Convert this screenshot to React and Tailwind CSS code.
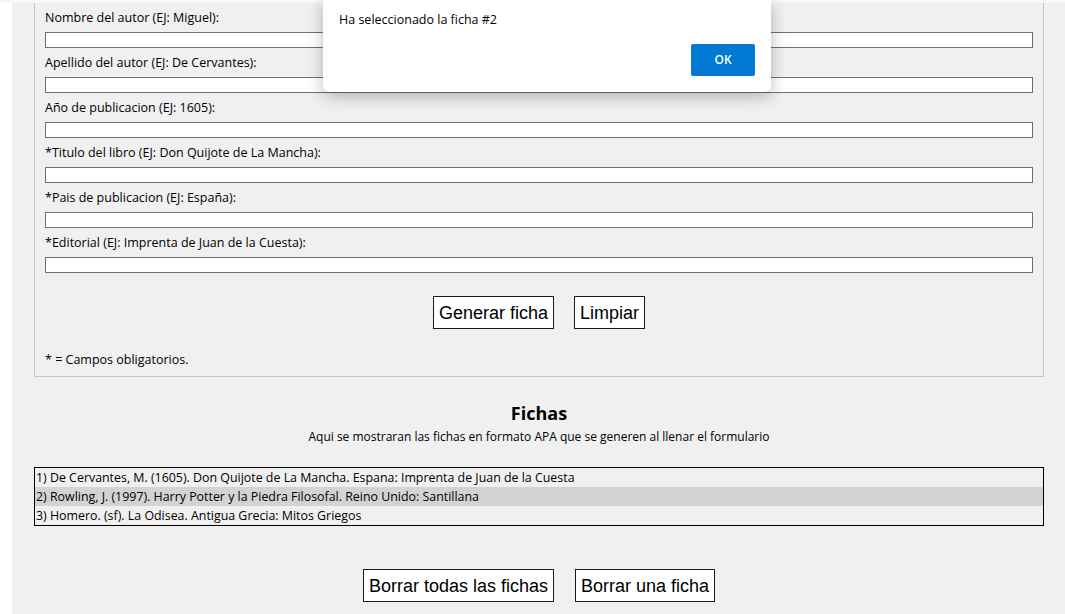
const fields = [
  'Nombre del autor (EJ: Miguel):',
  'Apellido del autor (EJ: De Cervantes):',
  'Año de publicacion (EJ: 1605):',
  '*Titulo del libro (EJ: Don Quijote de La Mancha):',
  '*Pais de publicacion (EJ: España):',
  '*Editorial (EJ: Imprenta de Juan de la Cuesta):',
];

const fichas = [
  '1) De Cervantes, M. (1605). Don Quijote de La Mancha. Espana: Imprenta de Juan de la Cuesta',
  '2) Rowling, J. (1997). Harry Potter y la Piedra Filosofal. Reino Unido: Santillana',
  '3) Homero. (sf). La Odisea. Antigua Grecia: Mitos Griegos',
];

const sans = "font-['Segoe_UI','Open_Sans','Noto_Sans',sans-serif]";
const btn = "border border-[#1a1a1a] bg-white px-[5px] h-[33px] text-[18px] leading-none text-black font-['Liberation_Sans',Arial,sans-serif]";

export default function App() {
  return (
    <div className={`relative w-[1065px] h-[614px] overflow-hidden bg-white ${sans}`}>
      <div className="h-[3px] bg-[#f8f8f8]" />
      <div className="ml-[12px] h-[611px] bg-[#f0f0f0] pl-[22px] pr-[21px] text-black">
        {/* formulario */}
        <div className="border border-t-0 border-[#c4c4c4] px-[10px] pt-[6px] pb-[7px]">
          {fields.map((f) => (
            <div key={f} className="mb-[6px]">
              <div className="h-[18px] text-[12.5px] leading-[18px]">{f}</div>
              <div className="mt-[5px] h-[16px] border border-[#707070] bg-white" />
            </div>
          ))}
          <div className="mt-[23px] flex justify-center gap-[20px]">
            <button className={btn}>Generar ficha</button>
            <button className={btn}>Limpiar</button>
          </div>
          <div className="mt-[22px] h-[18px] text-[12.5px] leading-[18px]">* = Campos obligatorios.</div>
        </div>

        {/* fichas */}
        <div className="mt-[24px] text-center">
          <div className="h-[24px] text-[18px] font-bold leading-[24px]">Fichas</div>
          <div className="mt-[4px] h-[16px] text-[12px] leading-[16px]">
            Aqui se mostraran las fichas en formato APA que se generen al llenar el formulario
          </div>
        </div>
        <div className="mt-[22px] border border-black">
          {fichas.map((t, i) => (
            <div
              key={t}
              className={`h-[19px] pl-[1px] text-[12.4px] leading-[19px] whitespace-nowrap ${i === 1 ? 'bg-[#d3d3d4]' : ''}`}
            >
              {t}
            </div>
          ))}
        </div>
        <div className="mt-[43px] flex justify-center gap-[21px]">
          <button className={btn}>Borrar todas las fichas</button>
          <button className={btn}>Borrar una ficha</button>
        </div>
      </div>

      {/* alerta */}
      <div className="absolute left-[323px] top-0 w-[448px] h-[92px] rounded-b-[6px] bg-white shadow-[0_4px_16px_rgba(0,0,0,0.28)]">
        <div className="absolute left-[16px] top-[11px] text-[12.5px] leading-[18px]">Ha seleccionado la ficha #2</div>
        <button className="absolute left-[368px] top-[44px] w-[64px] h-[32px] rounded-[2px] bg-[#0078d4] text-[12px] font-semibold text-white">
          OK
        </button>
      </div>
    </div>
  );
}
